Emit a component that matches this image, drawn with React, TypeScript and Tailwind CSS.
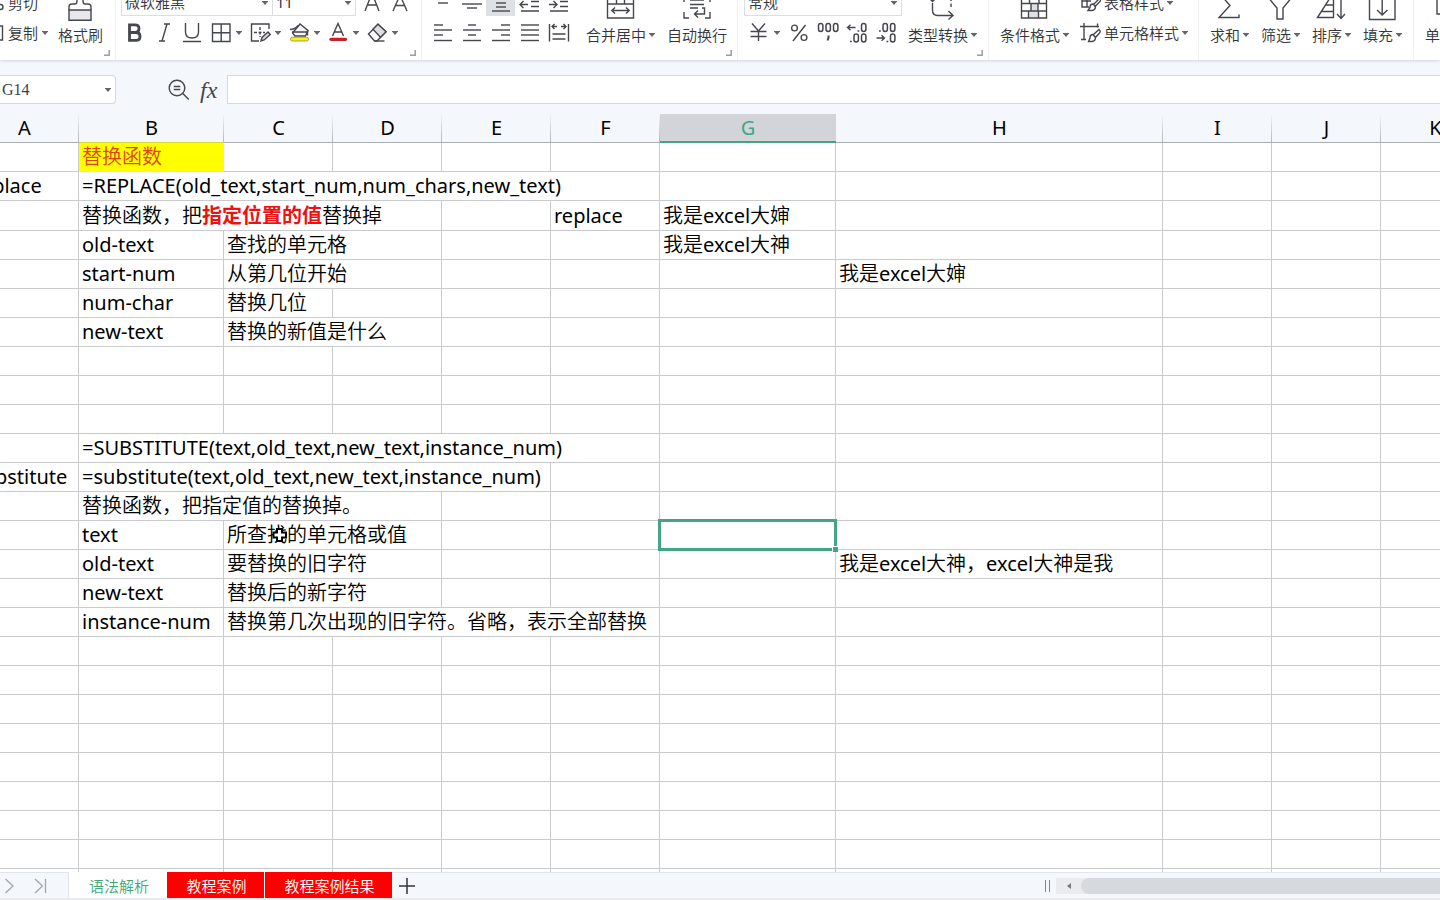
import React from "react";

const UI = "font-['Noto_Sans','Noto_Sans_CJK_SC_DemiLight','Noto_Sans_CJK_SC',sans-serif]";

function Caret() {
  return (
    <svg className="h-1 w-1.5 shrink-0" viewBox="0 0 6 4" aria-hidden="true">
      <path d="M0 0h6v0.6L3 4 0 0.600z" fill="#63656a" />
    </svg>
  );
}

type IconProps = { children: React.ReactNode; className?: string; box?: string };

function Icon({ children, className = "h-6 w-[22px]", box = "0 0 22 24" }: IconProps) {
  return (
    <svg
      className={`${className} shrink-0`}
      viewBox={box}
      fill="none"
      stroke="#45474d"
      strokeWidth="1.4"
      aria-hidden="true"
    >
      {children}
    </svg>
  );
}

function Group({ width, launcher, children }: { width: string; launcher?: boolean; children: React.ReactNode }) {
  return (
    <div className={`relative flex shrink-0 items-end border-r border-[#f0f1f4] pb-[15px] ${width}`}>
      {children}
      {launcher && (
        <svg className="absolute right-[5px] bottom-1 h-1.5 w-1.5" viewBox="0 0 6 6" fill="none" stroke="#9a9ca2" strokeWidth="1.5" aria-hidden="true">
          <path d="M5.2 0v5.2H0" />
        </svg>
      )}
    </div>
  );
}

function BigButton({ label, caret, className, children }: { label: string; caret?: boolean; className?: string; children: React.ReactNode }) {
  return (
    <button type="button" className={`flex shrink-0 flex-col items-start gap-1 whitespace-nowrap ${className ?? ""}`}>
      {children}
      <span className="flex items-center gap-[3px] leading-5">
        {label}
        {caret && <Caret />}
      </span>
    </button>
  );
}

function DropButton({ label, children }: { label: string; children: React.ReactNode }) {
  return (
    <button type="button" aria-label={label} className="flex h-6 w-[39px] shrink-0 items-center gap-1">
      {children}
      <Caret />
    </button>
  );
}

function Lines({ rows }: { rows: [number, number, number][] }) {
  return (
    <Icon>
      {rows.map(([x1, x2, y]) => (
        <path key={y} d={`M${x1} ${y}H${x2}`} />
      ))}
    </Icon>
  );
}

function Zero({ x, y }: { x: number; y: number }) {
  return <rect x={x} y={y} width="4.4" height="8" rx="2.2" strokeWidth="1.5" />;
}

function IconButton({ label, active, tall, children }: { label: string; active?: boolean; tall?: boolean; children: React.ReactNode }) {
  return (
    <button
      type="button"
      aria-label={label}
      className={`flex w-[29px] shrink-0 items-center justify-center ${tall ? "h-[26px]" : "h-6"} ${active ? "bg-[#dde0e5]" : ""}`}
    >
      {children}
    </button>
  );
}

function Picker({ label, value, width }: { label: string; value: string; width: string }) {
  return (
    <label className={`flex h-[26px] items-center border border-[#dcdee3] pr-1 ${width}`}>
      <select aria-label={label} className="min-w-0 flex-1 appearance-none bg-transparent pb-0.5 pl-[3px] leading-6 outline-none">
        <option>{value}</option>
      </select>
      <Caret />
    </label>
  );
}

function Ribbon() {
  return (
    <div className="relative z-10 flex h-[60px] shrink-0 items-end bg-white text-[15px] text-[#33353a] shadow-[0_1px_3px_rgba(0,0,0,0.14)]">
      <div className="flex h-[60px] w-full items-end overflow-hidden">
        <Group width="w-[116px]" launcher>
          <div className="-ml-3 flex w-[70px] shrink-0 flex-col gap-[5px]">
            <button type="button" className="flex h-[26px] items-center gap-1 whitespace-nowrap">
              <Icon className="h-4 w-4" box="0 0 16 16">
                <circle cx="4" cy="13" r="2.5" />
                <circle cx="12.5" cy="12" r="2.5" />
                <path d="M5 11l6-10M11 10L5 1" />
              </Icon>
              剪切
            </button>
            <button type="button" className="flex h-6 items-center gap-1 whitespace-nowrap">
              <Icon className="h-4 w-4" box="0 0 16 16">
                <path d="M4 1h10.5v14H4z" />
              </Icon>
              复制
              <Caret />
            </button>
          </div>
          <BigButton label="格式刷">
            <Icon className="ml-1.5 h-8 w-8" box="0 0 32 32">
              <path d="M5 21v10.3h22V21z" fill="#e8e8ec" />
              <path d="M5 21v-3q0-3 3-3h3q2 0 2-3V2h6v10q0 3 2 3h3q3 0 3 3v3" />
            </Icon>
          </BigButton>
        </Group>

        <Group width="w-[306px]" launcher>
          <div className="flex flex-col gap-[5px] pl-[5px]">
            <div className="flex">
              <Picker label="字体" value="微软雅黑" width="w-[152px]" />
              <Picker label="字号" value="11" width="-ml-px w-[84px]" />
              <button type="button" aria-label="增大字号" className="ml-2 h-[26px] w-4">
                <Icon className="h-[26px] w-4" box="0 0 16 26">
                  <path d="M1 21L8 3l7 18M3.500 15h9" />
                </Icon>
              </button>
              <button type="button" aria-label="减小字号" className="ml-3 h-[26px] w-4">
                <Icon className="h-[26px] w-4" box="0 0 16 26">
                  <path d="M1 21L8 5l7 16M3.500 15.500h9" />
                </Icon>
              </button>
            </div>
            <div className="flex">
              <button type="button" aria-label="加粗" className="flex h-6 w-7 items-center justify-center">
                <Icon>
                  <path d="M5.500 3.800h5.500q4 0 4 3.800t-4 3.800h-5.500zM5.500 11.500h6.500q4 0 4 3.900t-4 3.900h-6.500z" strokeWidth="2.800" />
                </Icon>
              </button>
              <button type="button" aria-label="倾斜" className="flex h-6 w-[29px] items-center justify-center">
                <Icon>
                  <path d="M11 3h6M6 20h6M14 3L9 20" />
                </Icon>
              </button>
              <button type="button" aria-label="下划线" className="mr-1 flex h-6 w-7 items-center justify-center">
                <Icon>
                  <path d="M4.500 2v9q0 6 6.500 6t6.500-6V2M2 20.500h18" />
                </Icon>
              </button>
              <DropButton label="边框">
                <Icon>
                  <path d="M2.500 3h17.500v17.500h-17.500zM11.200 3v17.500M2.500 11.700h17.500" />
                </Icon>
              </DropButton>
              <DropButton label="绘图边框">
                <Icon>
                  <path d="M20 8V3H2.500v17H10" />
                  <path d="M11 6v10M5 11.500h11" strokeDasharray="3 1.500" />
                  <path d="M12 20l1-3.500 6-5.500 2.200 2.500-6 5.500z" fill="#d9dade" />
                </Icon>
              </DropButton>
              <DropButton label="填充颜色">
                <Icon>
                  <path d="M4.500 12L12 3l8 6.500-2.500 5.500H7z" fill="#f3f3f5" />
                  <path d="M2 8.500q5 0 8-4M4 11h15M19.500 9.500v5" />
                  <rect x="2.500" y="16.200" width="18" height="3.800" rx="1.900" fill="#f5f02a" stroke="#8f9020" strokeWidth="0.800" />
                </Icon>
              </DropButton>
              <DropButton label="字体颜色">
                <Icon>
                  <path d="M5.500 15L11 2.500 16.500 15M7.500 11h7" />
                  <path d="M4 18.300h14.500" stroke="#c9202b" strokeWidth="3.200" strokeLinecap="round" />
                </Icon>
              </DropButton>
              <DropButton label="清除">
                <Icon>
                  <path d="M2.500 13L12 3.200l8 7.500L11 20H8.500z" />
                  <path d="M7 8.300L12 3.200l8 7.500-5.500 5.500z" fill="#dedfe3" />
                  <path d="M9 20h9.500" />
                </Icon>
              </DropButton>
            </div>
          </div>
        </Group>

        <Group width="w-[316px]" launcher>
          <div className="flex flex-col gap-[5px] pl-1.5">
            <div className="flex">
              <IconButton tall label="顶端对齐"><Lines rows={[[1, 21, 4], [6, 16, 12]]} /></IconButton>
              <IconButton tall label="垂直居中"><Lines rows={[[6, 16, 7], [1, 21, 13], [6, 16, 17]]} /></IconButton>
              <IconButton tall active label="底端对齐"><Lines rows={[[6, 16, 12], [6, 16, 16], [2, 20, 20]]} /></IconButton>
              <IconButton tall label="减少缩进">
                <Icon><path d="M1 13.500h8M4.500 10L1 13.500l3.500 3.500M12 10.500h8M12 15.500h8M2 20h18" /></Icon>
              </IconButton>
              <IconButton tall label="增加缩进">
                <Icon><path d="M1 13.500h8M5.500 10L9 13.500 5.500 17M12 10.500h8M12 15.500h8M2 20h18" /></Icon>
              </IconButton>
            </div>
            <div className="flex">
              <IconButton label="左对齐"><Lines rows={[[2, 11, 4], [2, 20, 9], [2, 11, 14], [2, 20, 19.5]]} /></IconButton>
              <IconButton label="水平居中"><Lines rows={[[7, 15, 4], [2, 20, 9], [7, 15, 14], [2, 20, 19.5]]} /></IconButton>
              <IconButton label="右对齐"><Lines rows={[[11, 20, 4], [2, 20, 9], [11, 20, 14], [2, 20, 19.5]]} /></IconButton>
              <IconButton label="两端对齐"><Lines rows={[[2, 20, 4], [2, 20, 9], [2, 20, 14], [2, 20, 19.5]]} /></IconButton>
              <IconButton label="分散对齐">
                <Icon><path d="M1.500 3v17.500M20.500 3v17.500M4.500 13h13M4.500 18h13M4 5.500h5M13 5.500h5M6.500 3L4 5.500 6.500 8M15.500 3L18 5.500 15.500 8" /></Icon>
              </IconButton>
            </div>
          </div>
          <BigButton label="合并居中" caret className="ml-[13px] w-[81px]">
            <Icon className="ml-[18px] h-8 w-8" box="0 0 32 32">
              <path d="M3.500 2v27h26V2M3.500 15h26M12.500 2v13M20.500 2v13M8 21.500h17M11 18.500l-3.200 3 3.200 3M22 18.500l3.200 3-3.200 3" />
            </Icon>
          </BigButton>
          <BigButton label="自动换行">
            <Icon className="ml-3.5 h-8 w-8" box="0 0 32 32">
              <path d="M3 8V3h5M24 3h5v10M3 13v-3M3 23v6h5M24 29h5v-6M9 11h14M9 15.500h14M9 19h8M21 19h2.500v6H14M17 21.500L13.500 25l3.500 3.500" />
            </Icon>
          </BigButton>
        </Group>

        <Group width="w-[251px]" launcher>
          <div className="flex flex-col gap-[5px] pl-1.5">
            <Picker label="数字格式" value="常规" width="w-[158px]" />
            <div className="flex">
              <button type="button" aria-label="货币" className="flex h-6 w-10 items-center gap-1 pl-1">
                <Icon>
                  <path d="M4 2.500l6.500 7.500 6.500-7.500M2.500 10.500h16M2.500 15.500h16M10.500 10v10" />
                </Icon>
                <Caret />
              </button>
              <IconButton label="百分比">
                <Icon>
                  <circle cx="6.500" cy="7" r="2.900" />
                  <circle cx="16" cy="16.500" r="2.900" />
                  <path d="M17.500 4L5 20" />
                </Icon>
              </IconButton>
              <IconButton label="千位分隔">
                <Icon>
                  <Zero x={1.5} y={2.5} />
                  <Zero x={9} y={2.5} />
                  <Zero x={16.5} y={2.5} />
                  <path d="M11.500 14.500v2.500l-1 2.500" strokeWidth="2" />
                </Icon>
              </IconButton>
              <IconButton label="减少小数位">
                <Icon>
                  <path d="M1.500 6.500h8M4.500 3.800L1.500 6.500l3 2.700M11.500 10h1.800M4 20.500h1.800" />
                  <Zero x={15.5} y={2.5} />
                  <Zero x={8} y={13} />
                  <Zero x={15.5} y={13} />
                </Icon>
              </IconButton>
              <IconButton label="增加小数位">
                <Icon>
                  <path d="M4 10h1.800M1.500 17h8M6.500 14.300l3 2.700-3 2.700M11.500 20.500h1.800" />
                  <Zero x={8} y={2.5} />
                  <Zero x={15.5} y={2.5} />
                  <Zero x={15.5} y={13} />
                </Icon>
              </IconButton>
            </div>
          </div>
          <BigButton label="类型转换" caret className="ml-1.5">
            <Icon className="ml-[18px] h-8 w-8" box="0 0 32 32">
              <path d="M12 4H9.500q-3 0-3 5v2.500M6.500 14v7q0 5.500 5 5.500H27M22.500 22l4.500 4.500-4.500 4M15 4h6q4 0 4 5v3M25 14.500V18M10 9l-3.500 3.500L3 9" />
            </Icon>
          </BigButton>
        </Group>

        <Group width="w-[210px]">
          <BigButton label="条件格式" caret className="ml-[11px]">
            <Icon className="ml-[18px] h-8 w-8" box="0 0 32 32">
              <path d="M13 15h7v7h-7zM11.500 22h9v7h-9z" fill="#dfe0e4" stroke="none" />
              <path d="M3.500 2v27h25V2M3.500 14.500h25M3.500 22h25M11.500 9v5.500M21 9v5.500M13 14.500V22M20 14.500V22M10.500 22v7M20.500 22v7M3.500 8h25" />
            </Icon>
          </BigButton>
          <div className="ml-2.5 flex flex-col gap-[5px]">
            <button type="button" className="flex h-[26px] items-center gap-[3px] whitespace-nowrap">
              <Icon>
                <path d="M19 6V3H3v13h7M3 10h9M8 3v13M13 3v5" />
                <path d="M20.500 7.500L14 14M20.500 7.500q2 1.500 0 3.500l-5 5M14 13q-3 0-3 3.500L9 19.500h4q3.500-.5 3.500-4z" />
              </Icon>
              表格样式
              <Caret />
            </button>
            <button type="button" className="flex h-6 items-center gap-[3px] whitespace-nowrap">
              <Icon>
                <path d="M1 5.500h19M5 2v17M2 18.500h5M18.500 2.500v4" />
                <path d="M14 14l6-5.500q2 1.500.500 3.500L16 17M14 13.500q-3 0-3 3.500l-1.500 3.500H13q3.500-.5 3.500-4z" />
              </Icon>
              单元格样式
              <Caret />
            </button>
          </div>
        </Group>

        <Group width="w-[215px]">
          <BigButton label="求和" caret className="ml-[11px] w-[51px]">
            <Icon className="ml-[3px] h-8 w-8" box="0 0 32 32">
              <path d="M26 7V4H6l11 12.500L6 28.500h20v-3" />
            </Icon>
          </BigButton>
          <BigButton label="筛选" caret className="w-[51px]">
            <Icon className="ml-[3px] h-8 w-8" box="0 0 32 32">
              <path d="M5.500 4h21v6l-7.500 9v11h-6V19L5.500 10z" />
            </Icon>
          </BigButton>
          <BigButton label="排序" caret className="w-[51px]">
            <Icon className="ml-[3px] h-8 w-8" box="0 0 32 32">
              <path d="M2.500 28.500L18.500 3.500v25zM10.500 16h8M6.500 22.500h12M26 3v26M22 25l4 4.500 4-4.500" />
            </Icon>
          </BigButton>
          <BigButton label="填充" caret className="w-[51px]">
            <Icon className="ml-[3px] h-8 w-8" box="0 0 32 32">
              <path d="M3.500 4h25.500v26.500H3.500zM16.200 9v17M11 21l5.200 5 5.200-5" />
            </Icon>
          </BigButton>
        </Group>

        <BigButton label="单元格" className="ml-[11px] mb-[15px]">
          <Icon className="ml-[9px] h-8 w-8" box="0 0 32 32">
            <path d="M3 5h24v20H3z" />
          </Icon>
        </BigButton>
      </div>
    </div>
  );
}

function FormulaBar() {
  return (
    <div className="flex shrink-0 items-center bg-[#f4f7fb] pt-[15px] pb-2.5">
      <label className="flex h-[29px] w-[116px] items-center rounded-r-sm border border-l-0 border-[#d5d8de] bg-white pr-1">
        <input
          aria-label="名称框"
          defaultValue="G14"
          className="min-w-0 flex-1 bg-transparent pt-px pl-0.5 font-['Liberation_Serif',serif] text-base text-[#3c3e43] outline-none"
        />
        <Caret />
      </label>
      <button type="button" aria-label="查找" className="ml-[52px]">
        <Icon className="h-[22px] w-[22px]" box="0 0 22 22">
          <circle cx="9" cy="9" r="7.800" />
          <path d="M14.800 14.500l6 6M5.800 7.500h6.500M5.800 10.500h6.500" />
        </Icon>
      </button>
      <button type="button" aria-label="插入函数" className="ml-2.5 w-5 text-left font-['Liberation_Serif',serif] text-[24px] leading-6 text-[#45474d] italic">
        fx
      </button>
      <input aria-label="编辑栏" className="ml-[7px] h-[29px] min-w-0 flex-1 border border-r-0 border-[#d5d8de] bg-white px-1 text-base outline-none" />
    </div>
  );
}

const COLUMNS: { name: string; width: string }[] = [
  { name: "A", width: "w-[109px]" },
  { name: "B", width: "w-[145px]" },
  { name: "C", width: "w-[109px]" },
  { name: "D", width: "w-[109px]" },
  { name: "E", width: "w-[109px]" },
  { name: "F", width: "w-[109px]" },
  { name: "G", width: "w-[176px]" },
  { name: "H", width: "w-[327px]" },
  { name: "I", width: "w-[109px]" },
  { name: "J", width: "w-[109px]" },
  { name: "K", width: "w-[109px]" },
];

type Cell = { text: React.ReactNode; span?: number; fill?: string };

const CELLS: Record<string, Cell> = {
  B1: { text: <span className="text-[#e0401c]">替换函数</span>, fill: "bg-[#ffff00] border-[#ffff00]" },
  A2: { text: "replace" },
  B2: { text: "=REPLACE(old_text,start_num,num_chars,new_text)", span: 5 },
  B3: {
    text: (
      <>
        替换函数，把
        <strong className="font-['Noto_Sans','Noto_Sans_CJK_SC',sans-serif] font-bold text-[#ee1111]">指定位置的值</strong>
        替换掉
      </>
    ),
    span: 3,
  },
  F3: { text: "replace" },
  G3: { text: "我是excel大婶" },
  B4: { text: "old-text" },
  C4: { text: "查找的单元格", span: 2 },
  G4: { text: "我是excel大神" },
  B5: { text: "start-num" },
  C5: { text: "从第几位开始", span: 2 },
  H5: { text: "我是excel大婶" },
  B6: { text: "num-char" },
  C6: { text: "替换几位" },
  B7: { text: "new-text" },
  C7: { text: "替换的新值是什么", span: 2 },
  B11: { text: "=SUBSTITUTE(text,old_text,new_text,instance_num)", span: 5 },
  A12: { text: "substitute" },
  B12: { text: "=substitute(text,old_text,new_text,instance_num)", span: 4 },
  B13: { text: "替换函数，把指定值的替换掉。", span: 3 },
  B14: { text: "text" },
  C14: { text: "所查找的单元格或值", span: 2 },
  B15: { text: "old-text" },
  C15: { text: "要替换的旧字符", span: 2 },
  H15: { text: "我是excel大神，excel大神是我" },
  B16: { text: "new-text" },
  C16: { text: "替换后的新字符", span: 2 },
  B17: { text: "instance-num" },
  C17: { text: "替换第几次出现的旧字符。省略，表示全部替换", span: 4 },
};

function Pointer() {
  return (
    <svg className="absolute top-1.5 left-12 z-10 h-4 w-4" viewBox="0 0 16 16" aria-hidden="true">
      <path d="M5 2h5v3.500h4v5h-4V14H5v-3.500H1.500v-5H5z" fill="#fff" stroke="#000" strokeWidth="2" />
    </svg>
  );
}

function Selection() {
  return (
    <div className="pointer-events-none absolute -inset-0.5 z-10 border-[3px] border-[#43a583]">
      <div className="absolute -right-1 -bottom-1 h-1.5 w-1.5 border-t border-l border-white bg-[#43a583]" />
    </div>
  );
}

function Row({ n }: { n: number }) {
  const tds: React.ReactNode[] = [];
  let i = 0;
  while (i < COLUMNS.length) {
    const key = `${COLUMNS[i].name}${n}`;
    const cell = CELLS[key];
    const span = cell?.span ?? 1;
    tds.push(
      <td
        key={key}
        colSpan={span}
        className={`relative border-r border-b p-0 pl-[3px] whitespace-nowrap ${cell?.fill ?? "border-[#c9cbcf]"}`}
      >
        {cell?.text}
        {key === "C14" && <Pointer />}
        {key === "G14" && <Selection />}
      </td>,
    );
    i += span;
  }
  return <tr className={n === 3 ? "h-[30px]" : "h-[29px]"}>{tds}</tr>;
}

function Sheet() {
  return (
    <div className="min-h-0 flex-1 overflow-hidden bg-white">
      <table className="-ml-[30px] w-[1520px] table-fixed border-separate border-spacing-0 text-[20px] leading-7 text-black">
        <thead>
          <tr className="h-[29px]">
            {COLUMNS.map(({ name, width }) => (
              <th
                key={name}
                scope="col"
                className={`p-0 font-normal ${width} ${
                  name === "G"
                    ? "border-b-2 border-[#43a583] bg-[#d2d4da] text-[#3fa882]"
                    : name === "B"
                      ? "border-b border-[#d6d92e] bg-[#f4f7fb]"
                      : "border-b border-[#a9adb4] bg-[#f4f7fb]"
                }`}
              >
                <div
                  className={`h-7 leading-7 ${
                    name === "G"
                      ? "-mb-px"
                      : "bg-linear-to-b from-[#f4f7fb] to-[#b4b8be] bg-[length:1px_100%] bg-right bg-no-repeat"
                  }`}
                >
                  {name}
                </div>
              </th>
            ))}
          </tr>
        </thead>
        <tbody>
          {Array.from({ length: 26 }, (_, r) => (
            <Row key={r} n={r + 1} />
          ))}
        </tbody>
      </table>
    </div>
  );
}

function TabBar() {
  return (
    <div className="flex h-7 shrink-0 items-start border-b-2 border-[#e9ebee] bg-[#f4f7fb] text-[15px]">
      <div className="flex h-[26px] w-[69px] items-center border-t border-r border-[#e1e4e9]">
        <button type="button" aria-label="下一个工作表" className="ml-1">
          <svg className="h-4 w-3" viewBox="0 0 12 16" fill="none" stroke="#a3a6ac" strokeWidth="1.300">
            <path d="M1.500 1l7.500 7-7.500 7" />
          </svg>
        </button>
        <button type="button" aria-label="最后一个工作表" className="ml-[18px]">
          <svg className="h-4 w-3.5" viewBox="0 0 14 16" fill="none" stroke="#a3a6ac" strokeWidth="1.300">
            <path d="M1 1l7.500 7L1 15M11.500 1v14" />
          </svg>
        </button>
      </div>
      <button type="button" className="h-[26px] w-[98px] bg-white pt-px pl-0.5 font-medium leading-[26px] text-[#3fa878]">语法解析</button>
      <button type="button" className="mr-px h-[26px] w-[97px] bg-[#ff0000] pt-px pl-0.5 leading-[26px] text-white">教程案例</button>
      <button type="button" className="h-[26px] w-[127px] bg-[#ff0000] pt-px pl-0.5 leading-[26px] text-white">教程案例结果</button>
      <div className="flex h-[26px] min-w-0 flex-1 items-center border-t border-[#e1e4e9]">
        <button type="button" aria-label="新建工作表" className="ml-[7px]">
          <svg className="h-4 w-4" viewBox="0 0 16 16" stroke="#33353a" strokeWidth="1.500">
            <path d="M8 0v16M0 8h16" />
          </svg>
        </button>
        <svg className="ml-auto h-3 w-[5px]" viewBox="0 0 5 12" stroke="#82858c" aria-hidden="true">
          <path d="M0.500 0v12M4.500 0v12" />
        </svg>
        <div className="ml-1.5 flex h-4 w-[384px] items-center bg-[#e9ebef]">
          <button type="button" aria-label="向左滚动" className="flex h-4 w-[25px] items-center justify-center">
            <svg className="h-1.5 w-1" viewBox="0 0 4 6">
              <path d="M4 0v6L0 3z" fill="#74777e" />
            </svg>
          </button>
          <div className="h-4 flex-1 rounded-l-full bg-[#d6d9de]" />
        </div>
      </div>
    </div>
  );
}

export default function App() {
  return (
    <div className={`flex h-screen flex-col overflow-hidden bg-white ${UI}`}>
      <Ribbon />
      <FormulaBar />
      <Sheet />
      <TabBar />
    </div>
  );
}
